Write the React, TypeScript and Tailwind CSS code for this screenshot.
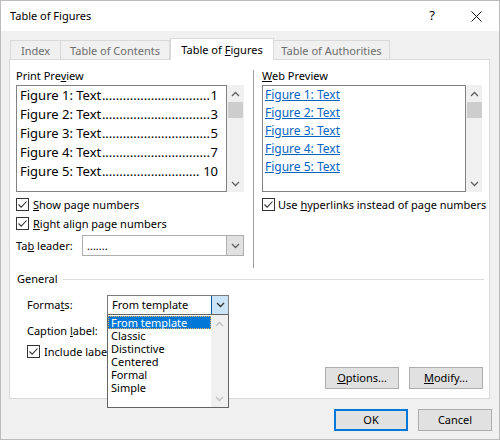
import React from 'react';

function Check() {
  return (
    <span className="w-[13px] h-[13px] shrink-0 border border-[#333333] bg-white flex items-center justify-center">
      <svg width="11" height="11" viewBox="0 0 11 11">
        <path d="M1.5 5.5 L4.2 8.2 L9.5 2.5" stroke="#333333" strokeWidth="1.1" fill="none" />
      </svg>
    </span>
  );
}

function Chevron({ up = false, color = '#606060' }: { up?: boolean; color?: string }) {
  return (
    <svg width="9" height="6" viewBox="0 0 9 6">
      <path d={up ? 'M1 5 L4.5 1.5 L8 5' : 'M1 1 L4.5 4.5 L8 1'} stroke={color} strokeWidth="1.3" fill="none" />
    </svg>
  );
}

function ScrollBar({ thumb = true, disabled = false }: { thumb?: boolean; disabled?: boolean }) {
  const c = disabled ? '#c0c0c0' : '#606060';
  return (
    <div className="w-full h-full bg-[#f0f0f0] flex flex-col items-center">
      <div className="h-[17px] w-full flex items-center justify-center">
        <Chevron up color={c} />
      </div>
      {thumb && <div className="w-[15px] h-[16px] bg-[#cdcdcd]" />}
      <div className="flex-1" />
      <div className="h-[17px] w-full flex items-center justify-center">
        <Chevron color={c} />
      </div>
    </div>
  );
}

const printRows = [
  ['Figure 1: Text', '1'],
  ['Figure 2: Text', '3'],
  ['Figure 3: Text', '5'],
  ['Figure 4: Text', '7'],
  ['Figure 5: Text', '10'],
];

const formats = ['From template', 'Classic', 'Distinctive', 'Centered', 'Formal', 'Simple'];

export default function App() {
  return (
    <div className="w-[500px] h-[440px] border border-[#bcbcbc] bg-[#f0f0f0] flex flex-col text-[11px] text-black font-['Noto_Sans',sans-serif] leading-[16px]">
      {/* title bar */}
      <div className="h-[30px] bg-white flex items-center pl-[9px] pr-[17px] shrink-0">
        <div className="flex-1 text-[11px]">Table of Figures</div>
        <div className="text-[13px] mr-[36px] mt-[-2px]">?</div>
        <svg width="11" height="11" viewBox="0 0 11 11">
          <path d="M0.5 0.5 L10.5 10.5 M10.5 0.5 L0.5 10.5" stroke="#111" strokeWidth="1" />
        </svg>
      </div>

      <div className="flex-1 flex flex-col pl-[8px] pt-[7px]">
        {/* tabs */}
        <div className="flex items-end h-[21px] pl-px">
          <div className="w-[51px] h-[20px] -mb-px border border-[#d9d9d9] bg-[#f0f0f0] text-[#6d6d6d] flex items-center justify-center pt-[2px]">Index</div>
          <div className="w-[109px] h-[20px] -mb-px border border-l-0 border-[#d9d9d9] bg-[#f0f0f0] text-[#6d6d6d] flex items-center justify-center pt-[2px]">Table of Contents</div>
          <div className="w-[104px] h-[22px] -mb-px relative z-10 border border-b-0 border-[#d9d9d9] bg-white flex items-center justify-center">
            Table of <span className="underline ml-[3px]">F</span>igures
          </div>
          <div className="w-[116px] h-[20px] -mb-px border border-l-0 border-[#d9d9d9] bg-[#f0f0f0] text-[#6d6d6d] flex items-center justify-center pt-[2px]">Table of Authorities</div>
        </div>

        {/* panel */}
        <div className="w-[481px] h-[340px] border border-[#d9d9d9] bg-white flex flex-col">
          <div className="flex items-start pl-[6px] pt-[8px]">
            {/* left column */}
            <div className="w-[228px] flex flex-col">
              <div className="h-[16px]">
                Print Pre<span className="underline">v</span>iew
              </div>
              <div className="flex mt-px h-[107px]">
                <div className="w-[211px] h-full border border-[#828282] bg-white pl-[3px] pr-[8px] text-[13px] leading-[19px]">
                  {printRows.map(([t, n]) => (
                    <div key={t} className="flex justify-between whitespace-nowrap">
                      <span>{t}</span>
                      <span>{'.'.repeat(n.length > 1 ? 28 : 31)}</span>
                      <span className={n.length > 1 ? 'ml-[3px]' : ''}>{n}</span>
                    </div>
                  ))}
                </div>
                <div className="w-[17px] h-full">
                  <ScrollBar />
                </div>
              </div>
              <div className="flex items-center gap-[4px] mt-[6px] h-[13px]">
                <Check />
                <span>
                  <span className="underline">S</span>how page numbers
                </span>
              </div>
              <div className="flex items-center gap-[4px] mt-[6px] h-[13px]">
                <Check />
                <span>
                  <span className="underline">R</span>ight align page numbers
                </span>
              </div>
              <div className="flex items-center mt-[5px]">
                <div className="w-[66px]">
                  Ta<span className="underline">b</span> leader:
                </div>
                <div className="w-[162px] h-[21px] border border-[#adadad] bg-white flex">
                  <div className="flex-1 pl-[4px] flex items-center">.......</div>
                  <div className="w-[17px] h-full bg-[#e1e1e1] border-l border-[#adadad] flex items-center justify-center">
                    <Chevron />
                  </div>
                </div>
              </div>
            </div>

            {/* divider */}
            <div className="ml-[9px] mt-[2px] w-px h-[198px] bg-[#a0a0a0]" />

            {/* right column */}
            <div className="ml-[8px] w-[220px] flex flex-col">
              <div className="h-[16px]">
                <span className="underline">W</span>eb Preview
              </div>
              <div className="flex mt-px h-[107px]">
                <div className="w-[204px] h-full border border-[#828282] bg-white pl-[2px] text-[12px] leading-[18px]">
                  {printRows.map(([t]) => (
                    <div key={t}>
                      <span className="text-[#0563c1] underline">{t}</span>
                    </div>
                  ))}
                </div>
                <div className="w-[16px] h-full">
                  <ScrollBar />
                </div>
              </div>
              <div className="flex items-center gap-[3px] mt-[6px] h-[13px]">
                <Check />
                <span className="whitespace-nowrap">
                  Use <span className="underline">h</span>yperlinks instead of page numbers
                </span>
              </div>
            </div>
          </div>

          {/* general */}
          <div className="flex items-center mt-[3px] pl-[7px] pr-[5px] h-[16px]">
            <span>General</span>
            <div className="flex-1 h-px bg-[#dcdcdc] ml-[5px]" />
          </div>

          <div className="flex items-center mt-[8px] pl-[17px]">
            <div className="w-[80px]">
              Forma<span className="underline">t</span>s:
            </div>
            <div className="relative w-[122px] h-[20px] border border-[#7a7a7a] bg-white flex">
              <div className="flex-1 pl-[4px] flex items-center">From template</div>
              <div className="w-[17px] h-full bg-[#cce4f7] border-l border-[#005499] flex items-center justify-center">
                <Chevron color="#333333" />
              </div>

              {/* open list */}
              <div className="absolute top-[18px] left-[-1px] w-[122px] h-[94px] border border-[#646464] bg-white z-20 flex">
                <div className="flex-1 pt-px">
                  {formats.map((f, i) => (
                    <div
                      key={f}
                      className={
                        i === 0
                          ? 'h-[13px] leading-[12px] px-[2px] bg-[#0078d7] text-white border border-dotted border-[#f0b060]'
                          : 'h-[13px] leading-[13px] px-[3px]'
                      }
                    >
                      {f}
                    </div>
                  ))}
                </div>
                <div className="w-[17px] h-full">
                  <ScrollBar thumb={false} disabled />
                </div>
              </div>
            </div>
          </div>

          <div className="mt-[8px] pl-[17px] h-[16px]">
            Caption <span className="underline">l</span>abel:
          </div>

          <div className="flex items-center gap-[4px] mt-[6px] pl-[17px] h-[13px]">
            <Check />
            <span className="whitespace-nowrap">Include label and number</span>
          </div>

          <div className="flex justify-end gap-[10px] mt-[9px] pr-[6px]">
            <div className="w-[74px] h-[22px] border border-[#adadad] bg-[#e1e1e1] flex items-center justify-center">
              <span>
                <span className="underline">O</span>ptions...
              </span>
            </div>
            <div className="w-[74px] h-[22px] border border-[#adadad] bg-[#e1e1e1] flex items-center justify-center">
              <span>
                <span className="underline">M</span>odify...
              </span>
            </div>
          </div>
        </div>

        {/* footer */}
        <div className="flex justify-end gap-[10px] mt-[10px] pr-[7px]">
          <div className="w-[74px] h-[22px] border-2 border-[#0078d7] bg-[#e1e1e1] flex items-center justify-center">OK</div>
          <div className="w-[74px] h-[22px] border border-[#adadad] bg-[#e1e1e1] flex items-center justify-center">Cancel</div>
        </div>
      </div>
    </div>
  );
}
